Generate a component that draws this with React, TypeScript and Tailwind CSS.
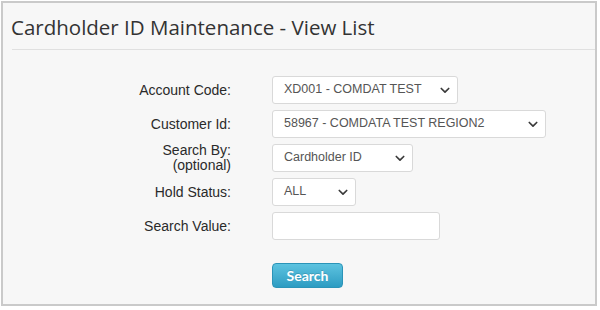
import React from "react";

function Chevron() {
  return (
    <svg width="10" height="7" viewBox="0 0 10 7" className="shrink-0">
      <path d="M1.3 1.5 L5 5.1 L8.7 1.5" fill="none" stroke="#3a3a3a" strokeWidth="1.7" strokeLinecap="round" strokeLinejoin="round" />
    </svg>
  );
}

function Select({ value, w }: { value: string; w: string }) {
  return (
    <div className={`${w} h-[28px] bg-white border border-[#d9d9d9] rounded-[3px] flex items-center justify-between pl-[11px] pr-[7px] text-[12.5px] text-[#555]`}>
      <span className="-mt-[1px]">{value}</span>
      <Chevron />
    </div>
  );
}

function Row({ label, children, two }: { label: React.ReactNode; children: React.ReactNode; two?: boolean }) {
  return (
    <div className="flex items-center h-[28px]">
      <div className={`w-[228px] text-right text-[14px] text-[#2a2a2a] ${two ? "leading-[15px]" : ""}`}>{label}</div>
      <div className="ml-[41px]">{children}</div>
    </div>
  );
}

export default function App() {
  return (
    <div className="w-[600px] h-[310px] bg-white" style={{ fontFamily: '"Liberation Sans", Arial, sans-serif' }}>
      <div className="ml-[1px] mt-[1px] w-[596px] h-[305px] border-2 border-[#cacaca] bg-[#f7f7f7] flex flex-col">
        <div
          className="pl-[8px] pt-[10px] pb-[8px] text-[20.5px] leading-[28px] text-[#333]"
          style={{ fontFamily: '"Open Sans", sans-serif' }}
        >
          Cardholder ID Maintenance - View List
        </div>
        <div className="ml-[9px] h-px bg-[#e0e0e0]" />
        <div className="flex flex-col gap-[6px] mt-[26px]">
          <Row label="Account Code:">
            <Select value="XD001 - COMDAT TEST" w="w-[186px]" />
          </Row>
          <Row label="Customer Id:">
            <Select value="58967 - COMDATA TEST REGION2" w="w-[274px]" />
          </Row>
          <Row label={<><div>Search By:</div><div>(optional)</div></>} two>
            <Select value="Cardholder ID" w="w-[141px]" />
          </Row>
          <Row label="Hold Status:">
            <Select value="ALL" w="w-[84px]" />
          </Row>
          <Row label="Search Value:">
            <div className="w-[168px] h-[28px] bg-white border border-[#d9d9d9] rounded-[3px]" />
          </Row>
        </div>
        <div className="mt-[23px] ml-[269px]">
          <button
            className="w-[71px] h-[25px] rounded-[4px] border border-[#2b94b8] bg-gradient-to-b from-[#5cc3e0] to-[#2c9cc2] text-white text-[14px] font-bold flex items-center justify-center"
            style={{ fontFamily: 'Lato, sans-serif', textShadow: "0 -1px 0 rgba(0,0,0,0.15)" }}
          >
            Search
          </button>
        </div>
      </div>
    </div>
  );
}
